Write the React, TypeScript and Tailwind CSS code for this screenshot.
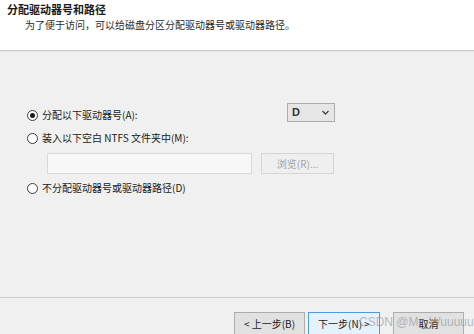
export default function App() {
  return (
    <div className="relative flex h-[334px] w-[474px] flex-col overflow-hidden bg-[#f0f0f0] font-['Noto_Sans_CJK_SC',sans-serif] text-[10px] text-[#1a1a1a]">
      <header className="h-[51px] shrink-0 border-b border-[#cdcdcd] bg-white pl-[7px] pt-[2px]">
        <div className="text-[11px] font-bold leading-[14px]">分配驱动器号和路径</div>
        <div className="mt-[2px] pl-[18px] leading-[14px] text-[#2a2a2a]">
          为了便于访问，可以给磁盘分区分配驱动器号或驱动器路径。
        </div>
      </header>

      <main className="flex-1 border-t border-[#e6e6e6] pl-[27px]">
        <div className="mt-[51px] flex h-[19px] w-[308px] items-start justify-between">
          <Radio checked label="分配以下驱动器号(A):" className="mt-[5px]" />
          <DriveSelect value="D" />
        </div>

        <Radio label="装入以下空白 NTFS 文件夹中(M):" className="mt-[9px]" />

        <div className="ml-[20px] mt-[8px] flex gap-[9px]">
          <div className="h-[21px] w-[205px] border border-[#d9d9d9] bg-[#f7f7f7]" />
          <button className="h-[21px] w-[73px] border border-[#d6d6d6] bg-[#efefef] text-[10px] text-[#a3a3a3]">
            浏览(R)...
          </button>
        </div>

        <Radio label="不分配驱动器号或驱动器路径(D)" className="mt-[7px]" />
      </main>

      <footer className="flex h-[37px] shrink-0 justify-end border-t border-[#cfcfcf] pr-[10px] pt-[14px]">
        <Btn className="w-[71px]">&lt; 上一步(B)</Btn>
        <Btn primary className="ml-[3px] w-[72px]">
          下一步(N) &gt;
        </Btn>
        <Btn className="ml-[13px] w-[71px]">取消</Btn>
      </footer>

      <span className="pointer-events-none absolute left-[359px] top-[314px] font-['Liberation_Sans',sans-serif] text-[12px] leading-[16px] text-[#8f8f8f]/60">
        CSDN @Mr_Wuuuuu
      </span>
    </div>
  );
}

function Radio({
  label,
  checked,
  className = "",
}: {
  label: string;
  checked?: boolean;
  className?: string;
}) {
  return (
    <div className={`flex h-[14px] items-center gap-[4px] ${className}`}>
      <span className="flex h-[11px] w-[11px] items-center justify-center rounded-full border border-[#3c3c3c] bg-white">
        {checked && <span className="h-[5px] w-[5px] rounded-full bg-[#1a1a1a]" />}
      </span>
      <span className="leading-[14px]">{label}</span>
    </div>
  );
}

function DriveSelect({ value }: { value: string }) {
  return (
    <div className="flex h-[19px] w-[48px] items-center justify-between border border-[#acacac] bg-[#e6e6e6] pl-[4px] pr-[5px]">
      <span className="font-['Liberation_Sans',sans-serif] text-[11px] font-bold leading-none text-[#333]">
        {value}
      </span>
      <svg width="7" height="5" viewBox="0 0 7 5" fill="none">
        <polyline points="0.5,1 3.5,4 6.5,1" stroke="#444" strokeWidth="1.3" />
      </svg>
    </div>
  );
}

function Btn({
  children,
  primary,
  className = "",
}: {
  children: React.ReactNode;
  primary?: boolean;
  className?: string;
}) {
  return (
    <button
      className={`h-[23px] text-[10px] leading-none text-[#1a1a1a] ${
        primary ? "border border-[#4a9be0] bg-[#e5f1fb]" : "border border-[#adadad] bg-[#e1e1e1]"
      } ${className}`}
    >
      {children}
    </button>
  );
}
